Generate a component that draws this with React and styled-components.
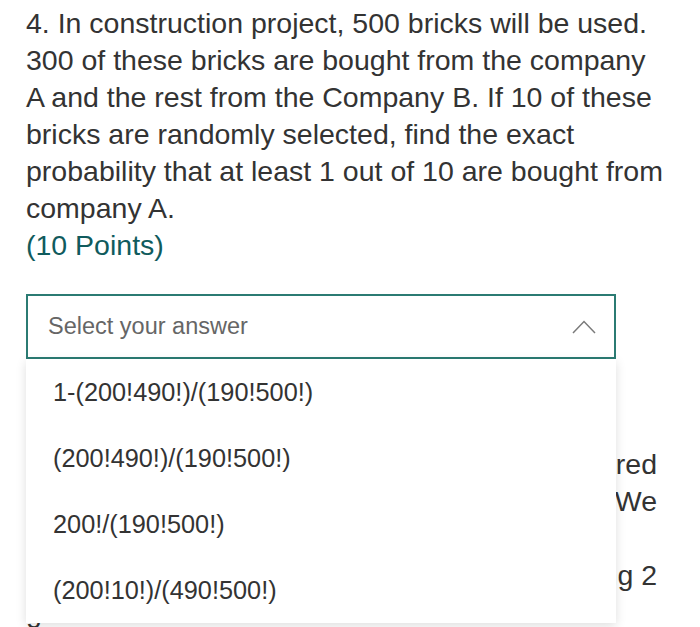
import styled, { createGlobalStyle } from 'styled-components';

const GlobalStyle = createGlobalStyle`
  html, body {
    margin: 0;
    padding: 0;
    background: #ffffff;
    overflow: hidden;
  }

  body {
    font-family: "Liberation Sans", Arial, sans-serif;
  }
`;

const questionLines = [
  '4. In construction project, 500 bricks will be used.',
  '300 of these bricks are bought from the company',
  'A and the rest from the Company B. If 10 of these',
  'bricks are randomly selected, find the exact',
  'probability that at least 1 out of 10 are bought from',
  'company A.',
];

const options = [
  '1-(200!490!)/(190!500!)',
  '(200!490!)/(190!500!)',
  '200!/(190!500!)',
  '(200!10!)/(490!500!)',
];

// next question, mostly hidden behind the open menu
const nextLines = [
  { text: '5. Suppose that 60% of all items manufactured', align: 'right' },
  { text: 'by a machine are defective. We', align: 'right' },
  { text: 'select items at random from', align: 'left' },
  { text: 'the production line, using 2', align: 'right' },
  { text: 'given that', align: 'left' },
];

export default function App() {
  return (
    <Page>
      <GlobalStyle />
      <Question>
        {questionLines.map((line) => (
          <Line key={line}>{line}</Line>
        ))}
        <Points>(10 Points)</Points>
      </Question>

      <SelectWrap>
        <SelectBox>
          <Placeholder>Select your answer</Placeholder>
          <svg width='24' height='15' viewBox='0 0 24 15'>
            <polyline
              points='1,14 12,2.5 23,14'
              fill='none'
              stroke='#7a7a7a'
              strokeWidth='1.5'
            />
          </svg>
        </SelectBox>
        <Menu>
          {options.map((opt) => (
            <Option key={opt}>{opt}</Option>
          ))}
        </Menu>
      </SelectWrap>

      <NextQuestion>
        {nextLines.map((l) => (
          <Line key={l.text} $align={l.align}>{l.text}</Line>
        ))}
      </NextQuestion>
    </Page>
  );
}

const Page = styled.div`
  width: 700px;
  height: 627px;
  overflow: hidden;
  padding: 5px 0 0 26px;
  box-sizing: border-box;
`;

const Question = styled.div`
  font-size: 28.5px;
  line-height: 37px;
  color: #333333;
`;

const Line = styled.div`
  white-space: nowrap;
  text-align: ${({ $align }) => $align || 'left'};
`;

const Points = styled.div`
  color: #105b5d;
`;

const SelectWrap = styled.div`
  position: relative;
  width: 590px;
  margin-top: 30px;
  z-index: 2;
`;

const SelectBox = styled.div`
  height: 65px;
  box-sizing: border-box;
  border: 2px solid #2b7b73;
  display: flex;
  align-items: center;
  justify-content: space-between;
  padding: 0 18px 0 20px;
  background: #ffffff;
`;

const Placeholder = styled.span`
  font-size: 23.5px;
  color: #666666;
`;

const Menu = styled.div`
  position: absolute;
  top: 100%;
  left: 0;
  right: 0;
  background: #ffffff;
  box-shadow: 0 3px 10px rgba(0, 0, 0, 0.13);
`;

const Option = styled.div`
  height: 66px;
  display: flex;
  align-items: center;
  padding-left: 27px;
  font-size: 25.3px;
  color: #333333;
`;

const NextQuestion = styled.div`
  width: 631px;
  margin-top: 87px;
  font-size: 28.5px;
  line-height: 37px;
  color: #333333;
`;
